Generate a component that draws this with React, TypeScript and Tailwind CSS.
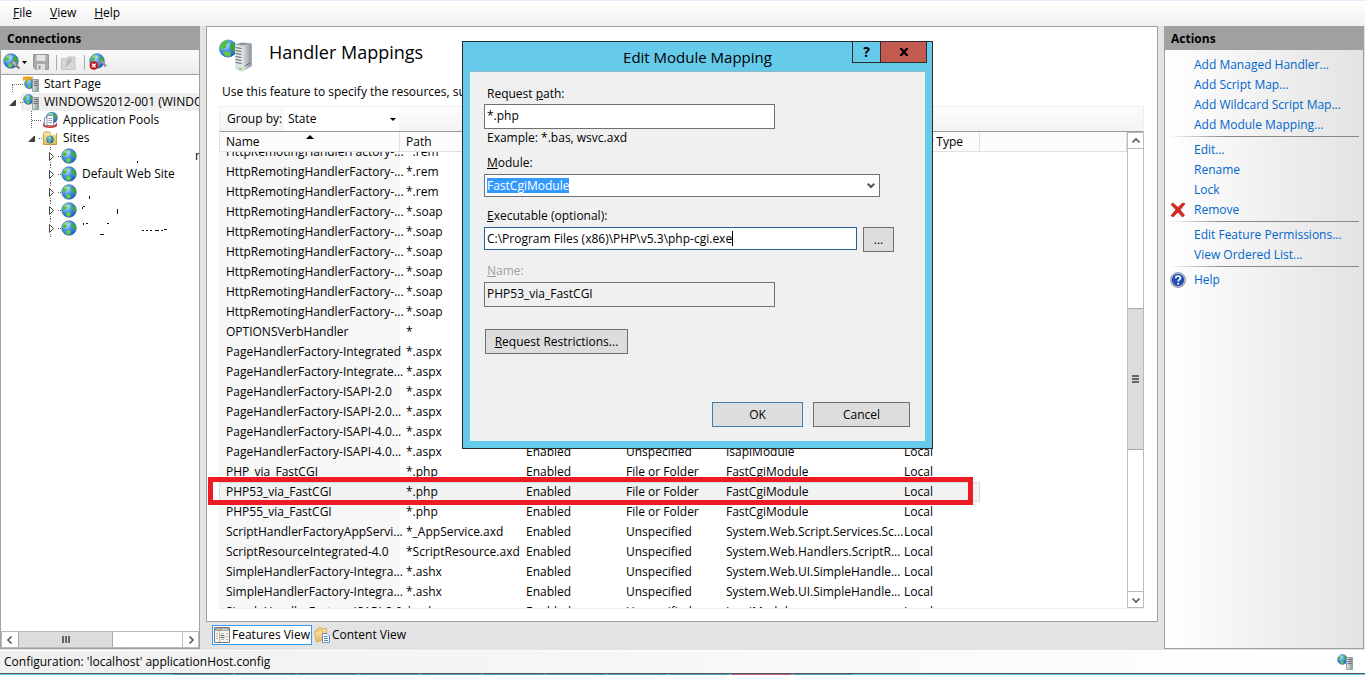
import React, { useLayoutEffect, useRef } from "react";

type HandlerRow = {
  name: string;
  path: string;
  pathType: string;
  handler: string;
  selected?: boolean;
};

const remoting = "HttpRemotingHandlerFactory-...";

const handlers: HandlerRow[] = [
  { name: remoting, path: "*.rem", pathType: "Unspecified", handler: "System.Runtime.Remoting..." },
  { name: remoting, path: "*.rem", pathType: "Unspecified", handler: "System.Runtime.Remoting..." },
  { name: remoting, path: "*.rem", pathType: "Unspecified", handler: "IsapiModule" },
  { name: remoting, path: "*.soap", pathType: "Unspecified", handler: "System.Runtime.Remoting..." },
  { name: remoting, path: "*.soap", pathType: "Unspecified", handler: "System.Runtime.Remoting..." },
  { name: remoting, path: "*.soap", pathType: "Unspecified", handler: "IsapiModule" },
  { name: remoting, path: "*.soap", pathType: "Unspecified", handler: "IsapiModule" },
  { name: remoting, path: "*.soap", pathType: "Unspecified", handler: "IsapiModule" },
  { name: remoting, path: "*.soap", pathType: "Unspecified", handler: "IsapiModule" },
  { name: "OPTIONSVerbHandler", path: "*", pathType: "Unspecified", handler: "ProtocolSupportModule" },
  { name: "PageHandlerFactory-Integrated", path: "*.aspx", pathType: "Unspecified", handler: "System.Web.UI.PageHandle..." },
  { name: "PageHandlerFactory-Integrate...", path: "*.aspx", pathType: "Unspecified", handler: "System.Web.UI.PageHandle..." },
  { name: "PageHandlerFactory-ISAPI-2.0", path: "*.aspx", pathType: "Unspecified", handler: "IsapiModule" },
  { name: "PageHandlerFactory-ISAPI-2.0...", path: "*.aspx", pathType: "Unspecified", handler: "IsapiModule" },
  { name: "PageHandlerFactory-ISAPI-4.0...", path: "*.aspx", pathType: "Unspecified", handler: "IsapiModule" },
  { name: "PageHandlerFactory-ISAPI-4.0...", path: "*.aspx", pathType: "Unspecified", handler: "IsapiModule" },
  { name: "PHP_via_FastCGI", path: "*.php", pathType: "File or Folder", handler: "FastCgiModule" },
  { name: "PHP53_via_FastCGI", path: "*.php", pathType: "File or Folder", handler: "FastCgiModule", selected: true },
  { name: "PHP55_via_FastCGI", path: "*.php", pathType: "File or Folder", handler: "FastCgiModule" },
  { name: "ScriptHandlerFactoryAppServi...", path: "*_AppService.axd", pathType: "Unspecified", handler: "System.Web.Script.Services.Sc..." },
  { name: "ScriptResourceIntegrated-4.0", path: "*ScriptResource.axd", pathType: "Unspecified", handler: "System.Web.Handlers.ScriptR..." },
  { name: "SimpleHandlerFactory-Integra...", path: "*.ashx", pathType: "Unspecified", handler: "System.Web.UI.SimpleHandle..." },
  { name: "SimpleHandlerFactory-Integra...", path: "*.ashx", pathType: "Unspecified", handler: "System.Web.UI.SimpleHandle..." },
  { name: "SimpleHandlerFactory-ISAPI-2.0", path: "*.ashx", pathType: "Unspecified", handler: "IsapiModule" },
];

const actionGroups = [
  ["Add Managed Handler...", "Add Script Map...", "Add Wildcard Script Map...", "Add Module Mapping..."],
  ["Edit...", "Rename", "Lock", "Remove"],
  ["Edit Feature Permissions...", "View Ordered List..."],
  ["Help"],
];

/* ---------- icons ---------- */

const IconDefs = () => (
  <svg width="0" height="0" className="absolute" aria-hidden="true">
    <defs>
      <radialGradient id="sea" cx="0.35" cy="0.3" r="0.8">
        <stop offset="0" stopColor="#c4e4ff" />
        <stop offset="0.45" stopColor="#4a92ee" />
        <stop offset="1" stopColor="#1c50b4" />
      </radialGradient>
      <linearGradient id="case" x1="0" y1="0" x2="1" y2="0">
        <stop offset="0" stopColor="#e3e7e9" />
        <stop offset="1" stopColor="#8d959a" />
      </linearGradient>
      <linearGradient id="folder" x1="0" y1="0" x2="0" y2="1">
        <stop offset="0" stopColor="#fbeab0" />
        <stop offset="1" stopColor="#e3b954" />
      </linearGradient>
    </defs>
  </svg>
);

const GlobeShape = () => (
  <g>
    <circle cx="8" cy="8" r="7.3" fill="url(#sea)" stroke="#2f5ca8" strokeWidth="0.6" />
    <path d="M2 5.5 4.2 2.4 7.2 1.4 8 3 6.4 4.6 6 6.4 4.2 7.4 2.8 8.8 1.2 8z" fill="#4fbf45" />
    <path d="M10.4 3.6 12.6 3.6 14.4 6 14.8 8.6 13.4 10.6 12.2 8.4 10.4 7z" fill="#3fae38" />
    <path d="M5.4 10.6 8 10 10 11.4 9.4 13.8 7 14.8 4.8 13z" fill="#63cf4c" />
    <ellipse cx="6" cy="3.6" rx="3" ry="1.6" fill="#fff" opacity="0.35" />
  </g>
);

const ServerShape = () => (
  <g>
    <path d="M9.5 3.5h6v12h-6z" fill="url(#case)" stroke="#8a9297" strokeWidth="0.8" />
    <path d="M10.5 5.5h4M10.5 7.5h4M10.5 9.5h4" stroke="#5b6367" strokeWidth="0.8" />
    <path d="M13 13h1.6v1.6H13z" fill="#5fe01c" />
  </g>
);

const GlobeIcon = () => (
  <svg width="16" height="16" viewBox="0 0 16 16" className="shrink-0">
    <GlobeShape />
  </svg>
);

const ServerIcon = ({ start = false }: { start?: boolean }) => (
  <svg width="16" height="16" viewBox="0 0 16 16" className="shrink-0">
    <g transform={start ? "translate(1 2) scale(0.7)" : "scale(0.68)"}>
      <GlobeShape />
    </g>
    <ServerShape />
    {start && <path d="M0 1h4l1-1 1 1h4L8.5 4 6 3 3.5 5.5 3 3 0 4.5z" fill="#f0a81c" stroke="#c98208" strokeWidth="0.4" />}
  </svg>
);

const ConnectIcon = ({ error = false }: { error?: boolean }) => (
  <svg width="18" height="18" viewBox="0 0 18 18" className="shrink-0">
    <GlobeShape />
    {error ? (
      <g>
        <path d="m10 10 3-1.5 4 5" stroke="#8d979e" strokeWidth="2.4" fill="none" />
        <circle cx="4.8" cy="12.5" r="4.3" fill="#c4161c" />
        <path d="m3 10.7 3.6 3.6m0-3.6L3 14.3" stroke="#fff" strokeWidth="1.4" />
      </g>
    ) : (
      <g>
        <path d="m8 9.5 3-2 3.5 3.5-2 3z" fill="#a9b6bf" stroke="#5a666e" strokeWidth="0.8" />
        <path d="m13 12.5 3.5 3" stroke="#66727a" strokeWidth="1.8" />
      </g>
    )}
  </svg>
);

const SaveIcon = () => (
  <svg width="16" height="16" viewBox="0 0 16 16">
    <path d="M0.5 0.5h15v15h-13l-2-2z" fill="#aaa" stroke="#999" />
    <path d="M3.5 1h9v6h-9z" fill="#e4e4e4" />
    <path d="M4 10h8v6H4z" fill="#dedede" />
    <path d="M5.5 11.5h2v4h-2z" fill="#999" />
  </svg>
);

const UpFolderIcon = () => (
  <svg width="15" height="15" viewBox="0 0 15 15">
    <path d="M0.5 3.5h5l1-1.5h7.5v12.5H0.5z" fill="#d6d6d6" stroke="#c4c4c4" />
    <path d="m3.5 12 3-5-2-.5 5-4 2 4.500-2-.5C9 9 7 11 3.5 12z" fill="#b8b8b8" />
  </svg>
);

const AppPoolIcon = () => (
  <svg width="16" height="16" viewBox="0 0 16 16" className="shrink-0">
    <g transform="translate(3.5 -0.5) scale(0.78)">
      <GlobeShape />
    </g>
    <path d="M1 9c0 7 14 7 14 0v5c-2 2.5-12 2.5-14 0z" fill="#cf3030" />
    <path d="M2.5 5.5h6v8h-6z" fill="#fff" stroke="#718195" strokeWidth="0.8" />
    <path d="M5 3.5h5.5l1 1v9H5z" fill="#fff" stroke="#718195" strokeWidth="0.8" />
    <path d="M6.5 6.5H10M6.5 8.5H10M6.5 10.5H10" stroke="#8797a8" strokeWidth="0.9" />
  </svg>
);

const SitesIcon = () => (
  <svg width="16" height="16" viewBox="0 0 16 16" className="shrink-0">
    <path d="M1.5 3.5 2.5 2h5l1 1.5h6v11h-13z" fill="url(#folder)" stroke="#c99d3c" />
    <path d="M9 3h5v1.5H9z" fill="#fff" />
    <g transform="translate(4 5.5) scale(0.5)">
      <GlobeShape />
    </g>
  </svg>
);

const HandlerMappingsIcon = () => (
  <svg width="34" height="34" viewBox="0 0 34 34" className="shrink-0">
    <circle cx="9" cy="9.5" r="9" fill="url(#sea)" />
    <path d="M1 7 3 3.5 8 1l2 1.5-2.5 3L7 8.5 3.5 10 1 11z" fill="#53bd3e" />
    <path d="M12 4l3-.5L17.5 7l.5 3-3 5-2-4-2-2z" fill="#3da536" />
    <path d="M4 13l5-1 3 2-1 4-5-1z" fill="#62c749" />
    <path d="M16 5.5 23 3.5l9.5 1V27L23 32.5l-7-3z" fill="#8d9599" />
    <path d="M16 5.5 23 6.5v26l-7-3z" fill="#dde2e4" />
    <path d="M23 6.5 32.5 4.5V27L23 32.5z" fill="url(#case)" />
    <path d="m16.5 8.5 6 1m-6 2 6 1m-6 2 6 1m-6 2 6 1m-6 2 6 1m-6 2 6 1" stroke="#636c74" strokeWidth="1" />
    <path d="m20 28.5 2.5.8v1.8l-2.5-.8z" fill="#55e40d" />
    <path d="m26 27 5-3" stroke="#5e6669" strokeWidth="1" />
  </svg>
);

const RemoveIcon = () => (
  <svg width="16" height="16" viewBox="0 0 16 16">
    <path
      d="M1 2.5 3 1l5 4.500L12.500 1l2.500.8L10 7.800l4.500 5.400L12.500 15 8 10l-5 5-2-1.500L6 7.800z"
      fill="#e1251b"
      stroke="#a3201b"
      strokeWidth="0.7"
    />
  </svg>
);

const HelpIcon = () => (
  <svg width="16" height="16" viewBox="0 0 16 16">
    <circle cx="8" cy="8" r="7.5" fill="#c9cdd6" stroke="#7c8496" strokeWidth="0.8" />
    <circle cx="8" cy="8" r="6.2" fill="#2450b4" />
    <path d="M5.7 6.3c0-3 4.7-3 4.7-.3 0 1.7-2.2 1.7-2.2 3.5" fill="none" stroke="#fff" strokeWidth="1.7" />
    <circle cx="8.2" cy="11.8" r="1" fill="#fff" />
  </svg>
);

const FeaturesIcon = () => (
  <svg width="16" height="16" viewBox="0 0 16 16" className="shrink-0">
    <path d="M0.5 0.5h15v15h-15z" fill="#f4f4f0" stroke="#7b7b76" />
    <path d="M1 1h14v3H1z" fill="#a9a9a4" />
    <path d="M9 2.5h1.5m1 0H13" stroke="#fff" />
    <path d="M5.5 4v11" stroke="#b5b5ae" />
    <path d="M2 6.5h2M2 9h2m-2 2.5h2M7 6.5h3m2 0h2M7 12.5h3m2 0h2" stroke="#b3b39f" />
    <path d="M6.5 8.5h4m-4 2h4" stroke="#5e6570" />
    <path d="M12 9.5h2.5" stroke="#b3b39f" />
  </svg>
);

const ContentIcon = () => (
  <svg width="16" height="16" viewBox="0 0 16 16" className="shrink-0">
    <path d="M3 2 6 0.5l2 1h4.5V12H3z" fill="#f3dc94" stroke="#cda649" strokeWidth="0.8" />
    <path d="M0.5 4.5 8 3l1.5 10-7 2z" fill="url(#folder)" stroke="#cda649" strokeWidth="0.8" />
    <path d="M8.5 6.5H13l2.5 2.5v6.5h-7z" fill="#fff" stroke="#6c8fc4" />
    <path d="M10 9.5h3.5M10 11.5h4M10 13.5h4" stroke="#4c86cf" />
  </svg>
);

const Chevron = ({ dir }: { dir: "up" | "down" | "left" | "right" }) => {
  const d = {
    up: "m1.5 6.5 3.5-3.5 3.5 3.5",
    down: "m1.5 3.5 3.5 3.5 3.5-3.5",
    left: "M6.5 1.5 3 5l3.5 3.5",
    right: "M3.5 1.5 7 5 3.5 8.5",
  }[dir];
  return (
    <svg width="10" height="10" viewBox="0 0 10 10">
      <path d={d} fill="none" stroke="#555" strokeWidth="1.6" />
    </svg>
  );
};

/* ---------- connections tree ---------- */

const Expander = ({ open, x }: { open: boolean; x: number }) =>
  open ? (
    <path d={`M${x} 12.5h5.5V7z`} fill="#404040" stroke="#262626" strokeWidth="0.8" />
  ) : (
    <path d={`M${x + 0.5} 5.5v8l4-4z`} fill="#fff" stroke="#444" strokeWidth="1" />
  );

const Gutter = ({ width, children }: { width: number; children: React.ReactNode }) => (
  <svg width={width} height="18" viewBox={`0 0 ${width} 18`} className="shrink-0">
    {children}
  </svg>
);

const dots = { stroke: "#666", strokeDasharray: "1 1", fill: "none" };

const SiteRow = ({ children }: { children?: React.ReactNode }) => (
  <li className="flex h-[18px] items-center">
    <Gutter width={60}>
      <path d="M49.5 0v4M49.5 15v3M57 9.5h3" {...dots} />
      <Expander open={false} x={48} />
    </Gutter>
    <GlobeIcon />
    <span className="ml-[5px] flex flex-1 items-center">{children}</span>
  </li>
);

const Specks = ({ d }: { d: string }) => (
  <svg width="110" height="18" viewBox="0 0 110 18">
    <path d={d} fill="#111" />
  </svg>
);

const PanelHeader = ({ children }: { children: React.ReactNode }) => (
  <h2 className="flex h-[23px] shrink-0 items-center bg-[#a0a0a0] pl-[6px] font-bold">{children}</h2>
);

const Connections = () => (
  <aside className="flex w-[200px] shrink-0 flex-col border border-[#a0a0a0] bg-white">
    <PanelHeader>Connections</PanelHeader>
    <div className="flex h-[25px] shrink-0 items-center border-b border-[#a0a0a0] bg-linear-to-b from-[#fafafa] to-[#ececec] pl-[2px]">
      <button aria-label="Connect" className="flex items-center gap-px">
        <ConnectIcon />
        <svg width="5" height="3" viewBox="0 0 5 3">
          <path d="M0 0h5L2.5 3z" />
        </svg>
      </button>
      <button aria-label="Save connections" className="ml-[6px]">
        <SaveIcon />
      </button>
      <span className="ml-[7px] h-[15px] w-px bg-[#aaa]" />
      <button aria-label="Up" className="ml-[4px]">
        <UpFolderIcon />
      </button>
      <span className="ml-[8px] h-[15px] w-px bg-[#aaa]" />
      <button aria-label="Disconnect" className="ml-[4px]">
        <ConnectIcon error />
      </button>
    </div>

    <ul className="flex-1 overflow-hidden whitespace-nowrap">
      <li className="flex h-[18px] items-center">
        <Gutter width={22}>
          <path d="M11.5 10v8M11 9.5h11" {...dots} />
        </Gutter>
        <ServerIcon start />
        <span className="ml-[5px]">Start Page</span>
      </li>
      <li className="flex h-[18px] items-center bg-linear-to-r from-white from-10% to-[#efefef] to-10%">
        <Gutter width={22}>
          <Expander open x={9} />
          <path d="M19 9.5h3" {...dots} />
        </Gutter>
        <ServerIcon />
        <span className="ml-[5px]">WINDOWS2012-001 (WINDOWS2012-001\Administrator)</span>
      </li>
      <li className="flex h-[18px] items-center">
        <Gutter width={41}>
          <path d="M30.5 0v18M31 9.5h10" {...dots} />
        </Gutter>
        <AppPoolIcon />
        <span className="ml-[5px]">Application Pools</span>
      </li>
      <li className="flex h-[18px] items-center">
        <Gutter width={41}>
          <Expander open x={28} />
          <path d="M38 9.5h3" {...dots} />
        </Gutter>
        <SitesIcon />
        <span className="ml-[5px]">Sites</span>
      </li>
      <SiteRow>
        <Specks d="M55 14h1v2h-1z" />
        <span className="ml-[3px]">r</span>
      </SiteRow>
      <SiteRow>Default Web Site</SiteRow>
      <SiteRow>
        <Specks d="M7 13h1v3H7z" />
      </SiteRow>
      <SiteRow>
        <Specks d="M1 5h2v1H1zM0 6h1v2H0zM35 8h1v5h-1z" />
      </SiteRow>
      <SiteRow>
        <Specks d="M1 4h1v2H1zM4 4h2v1H4zM25 4h2v1h-2zM18 15h4v1h-4zM60 11h2v1h-2zM64 11h2v1h-2zM68 11h2v1h-2zM73 11h4v1h-4zM79 11h2v1h-2zM82 10h3v1h-3z" />
      </SiteRow>
    </ul>

    <div className="flex h-[17px] shrink-0 border border-[#bbb]">
      <button aria-label="Scroll left" className="flex w-[16px] items-center justify-center">
        <Chevron dir="left" />
      </button>
      <div className="flex w-[95px] items-center justify-center gap-px border-x border-[#a8a8a8] bg-[#dcdcdc]">
        <span className="h-[7px] w-[2px] bg-[#666]" />
        <span className="h-[7px] w-[2px] bg-[#666]" />
        <span className="h-[7px] w-[2px] bg-[#666]" />
      </div>
      <button aria-label="Scroll right" className="ml-auto flex w-[16px] items-center justify-center border-l border-[#bbb]">
        <Chevron dir="right" />
      </button>
    </div>
  </aside>
);

/* ---------- handler list ---------- */

const HandlerTable = () => {
  const listRef = useRef<HTMLDivElement>(null);

  // the list opens half a row down
  useLayoutEffect(() => {
    if (listRef.current) listRef.current.scrollTop = 10;
  }, []);

  const th = "sticky top-0 h-[20px] border-r border-b border-[#e0e0e0] bg-[#fcfcfc] p-0 text-left font-normal";
  const td = "h-[20px] p-0";

  return (
    <div className="flex min-h-0 flex-1 border-b border-[#eee]">
      <div ref={listRef} className="min-w-0 flex-1 overflow-hidden">
        <table className="w-full table-fixed border-separate border-spacing-0 leading-[18px] whitespace-nowrap">
          <colgroup>
            <col className="w-[181px]" />
            <col className="w-[120px]" />
            <col className="w-[100px]" />
            <col className="w-[100px]" />
            <col className="w-[180px]" />
            <col className="w-[80px]" />
            <col />
          </colgroup>
          <thead>
            <tr>
              <th className={th + " border-l pl-[6px]"}>
                Name
                <svg width="8" height="4" viewBox="0 0 8 4" className="absolute top-[3px] left-[86px]">
                  <path d="M0 4h8L4 0z" />
                </svg>
              </th>
              <th className={th + " pl-[6px]"}>Path</th>
              <th className={th + " pl-[6px]"}>State</th>
              <th className={th + " pl-[6px]"}>Path Type</th>
              <th className={th + " pl-[6px]"}>Handler</th>
              <th className={th + " pl-[4px]"}>Entry Type</th>
              <th className={th} aria-label="Filler" />
            </tr>
          </thead>
          <tbody>
            {handlers.map((row, i) => {
              const mark = row.selected ? " border-y border-[#dadada] bg-[#f2f2f2]" : "";
              return (
                <tr key={i}>
                  <td className={td + " pl-[6px]" + (mark ? mark + " border-l" : " border-l border-[#f7f7f7] bg-[#f7f7f7]")}>
                    {row.name}
                  </td>
                  <td className={td + " pl-[6px]" + mark}>{row.path}</td>
                  <td className={td + " pl-[6px]" + mark}>Enabled</td>
                  <td className={td + " pl-[6px]" + mark}>{row.pathType}</td>
                  <td className={td + " pl-[6px]" + mark}>{row.handler}</td>
                  <td className={td + " pl-[4px]" + (mark && mark + " border-r")}>Local</td>
                  <td />
                </tr>
              );
            })}
          </tbody>
        </table>
      </div>
      <div className="flex w-[17px] shrink-0 flex-col border border-[#bbb] bg-white">
        <button aria-label="Scroll up" className="flex h-[16px] items-center justify-center border-b border-[#bbb]">
          <Chevron dir="up" />
        </button>
        <div className="flex-[159]" />
        <div className="flex h-[142px] flex-col items-center justify-center gap-px border-y border-[#a8a8a8] bg-[#dcdcdc]">
          <span className="h-[2px] w-[7px] bg-[#666]" />
          <span className="h-[2px] w-[7px] bg-[#666]" />
          <span className="h-[2px] w-[7px] bg-[#666]" />
        </div>
        <div className="flex-[141]" />
        <button aria-label="Scroll down" className="flex h-[16px] items-center justify-center border-t border-[#bbb]">
          <Chevron dir="down" />
        </button>
      </div>
    </div>
  );
};

const FeaturePage = () => (
  <main className="flex min-w-0 flex-1 flex-col">
    <section className="relative flex min-h-0 flex-1 flex-col border border-[#a0a0a0] bg-white pt-[12px] pr-[13px] pb-[12px] pl-[12px]">
      <div className="flex h-[34px] shrink-0 items-center gap-[16px]">
        <HandlerMappingsIcon />
        <h1 className="mb-[8px] text-[18px]">Handler Mappings</h1>
      </div>
      <p className="mt-[10px] mb-[5px] h-[18px] max-w-[700px] shrink-0 truncate pl-[3px] leading-[18px]">
        Use this feature to specify the resources, such as DLLs and managed code, that handle responses
      </p>
      <div className="flex h-[26px] shrink-0 items-center border-x border-t border-b border-[#eee] border-b-[#999] bg-linear-to-b from-[#fcfcfc] to-[#f3f3f3] pl-[7px]">
        <label htmlFor="group-by" className="w-[57px]">
          Group by:
        </label>
        <div className="relative flex h-full items-center">
          <select id="group-by" className="h-full w-[115px] appearance-none bg-white pl-[4px]">
            <option>State</option>
          </select>
          <svg width="6" height="3" viewBox="0 0 6 3" className="pointer-events-none absolute right-[3px]">
            <path d="M0 0h6L3 3z" />
          </svg>
        </div>
      </div>
      <HandlerTable />
      <div className="pointer-events-none absolute top-[450px] left-px h-[28px] w-[765px] border-[5px] border-[#ed1c24]" />
    </section>

    <div className="flex h-[27px] shrink-0 items-start pt-[3px] pl-[6px]">
      <button className="flex h-[20px] items-center gap-[2px] border border-[#3399ff] bg-white px-px">
        <FeaturesIcon />
        Features View
      </button>
      <button className="flex h-[20px] items-center gap-[2px] px-[2px]">
        <ContentIcon />
        Content View
      </button>
    </div>
  </main>
);

/* ---------- actions ---------- */

const Actions = () => (
  <aside className="mr-px flex w-[200px] shrink-0 flex-col border border-[#a0a0a0] bg-linear-to-r from-white to-[#e3e3e3]">
    <PanelHeader>Actions</PanelHeader>
    <div className="pt-[5px]">
      {actionGroups.map((group, i) => (
        <ul key={i}>
          {i > 0 && <li className="mt-px mr-[4px] mb-[3px] ml-[4px] h-px bg-linear-to-r from-transparent to-[#888] to-30%" />}
          {group.map((label) => (
            <li key={label} className="flex h-[20px] items-center">
              <span className="flex w-[29px] justify-center pr-[3px]">
                {label === "Remove" && <RemoveIcon />}
                {label === "Help" && <HelpIcon />}
              </span>
              <a href="#" className="whitespace-nowrap text-[#0066cc]">
                {label}
              </a>
            </li>
          ))}
        </ul>
      ))}
    </div>
  </aside>
);

/* ---------- dialog ---------- */

const EditModuleDialog = () => {
  const label = "ml-[3px] flex h-[16px] items-center whitespace-pre";
  const button = "h-[25px] border border-[#707070] bg-[#dddddd]";

  return (
    <div
      role="dialog"
      aria-labelledby="dialog-title"
      className="absolute top-[41px] left-[462px] w-[471px] border border-[#2b2b2b] bg-[#66cbea] px-[7px] pb-[7px]"
    >
      <div className="relative flex h-[29px] items-center justify-center">
        <h2 id="dialog-title" className="text-[15px]">
          Edit Module Mapping
        </h2>
        <div className="absolute top-0 -right-[2px] flex h-[21px] border-x border-b border-[#2b2b2b] font-bold">
          <button aria-label="Help" className="w-[28px] border-r border-[#2b2b2b] text-[14px] leading-[18px]">
            ?
          </button>
          <button aria-label="Close" className="flex w-[45px] items-center justify-center bg-[#c35a50]">
            <svg width="10" height="8" viewBox="0 0 10 8">
              <path d="m1.5 0 7 8m0-8-7 8" stroke="#000" strokeWidth="2.2" />
            </svg>
          </button>
        </div>
      </div>

      <form className="border-t border-[#8fb9c8] bg-[#f0f0f0] pt-[14px] pr-[15px] pb-[14px] pl-[14px]">
        <label htmlFor="request-path" className={label}>
          Request <u>p</u>ath:
        </label>
        <input
          id="request-path"
          defaultValue="*.php"
          className="mt-[2px] block h-[25px] w-[291px] border border-[#707070] bg-white px-[2px] pb-[2px]"
        />
        <p className="ml-[3px] h-[18px] leading-[18px]">Example: *.bas, wsvc.axd</p>

        <label htmlFor="module" className={label + " mt-[8px]"}>
          <u>M</u>odule:
        </label>
        <div className="mt-[3px] flex h-[23px] w-[396px] items-center border border-[#707070] bg-white pr-[4px] pl-[2px]">
          <select
            id="module"
            className="h-[15px] appearance-none bg-[#3399ff] leading-[15px] text-white field-sizing-content"
          >
            <option>FastCgiModule</option>
          </select>
          <svg width="8" height="6" viewBox="0 0 8 6" className="ml-auto">
            <path d="m0.7 0.7 3.3 3.3L7.3 0.7" fill="none" stroke="#555" strokeWidth="2" />
          </svg>
        </div>

        <label htmlFor="executable" className={label + " mt-[11px]"}>
          <u>E</u>xecutable (optional):
        </label>
        <div className="mt-[3px] flex items-start gap-[6px]">
          <div className="flex h-[23px] w-[373px] items-center border border-[#26639c] bg-white pl-[2px]">
            <input
              id="executable"
              defaultValue="C:\Program Files (x86)\PHP\v5.3\php-cgi.exe"
              className="outline-none field-sizing-content"
            />
            <span className="h-[15px] w-px bg-black" />
          </div>
          <button type="button" aria-label="Browse" className={button + " w-[31px]"}>
            ...
          </button>
        </div>

        <label htmlFor="mapping-name" className={label + " mt-[11px] text-[#a0a0a0]"}>
          <u>N</u>ame:
        </label>
        <input
          id="mapping-name"
          readOnly
          defaultValue="PHP53_via_FastCGI"
          className="mt-[3px] block h-[25px] w-[291px] border border-[#707070] px-[2px] pb-[2px]"
        />

        <button type="button" className={button + " mt-[22px] ml-px block w-[143px]"}>
          <u>R</u>equest Restrictions...
        </button>

        <div className="mt-[48px] flex justify-end gap-[10px]">
          <button type="button" className="h-[25px] w-[91px] border border-[#3c7fb1] bg-[#dddddd]">
            OK
          </button>
          <button type="button" className={button + " w-[97px]"}>
            Cancel
          </button>
        </div>
      </form>
    </div>
  );
};

export default function App() {
  return (
    <div className="relative flex h-screen flex-col overflow-hidden bg-[#e3e3e3] font-['Open_Sans','Noto_Sans',sans-serif] text-[12px] leading-[16px] text-black">
      <IconDefs />
      <nav className="flex h-[26px] shrink-0 items-center gap-[18px] border-t border-[#e4ecfb] bg-linear-to-b from-white to-[#f0f0f0] pb-px pl-[13px]">
        <button>
          <u>F</u>ile
        </button>
        <button>
          <u>V</u>iew
        </button>
        <button>
          <u>H</u>elp
        </button>
      </nav>

      <div className="flex min-h-0 flex-1 gap-[6px] pb-px">
        <Connections />
        <FeaturePage />
        <Actions />
      </div>

      <footer className="flex h-[23px] shrink-0 items-center justify-between border-t border-white bg-linear-to-r from-[#f0f0f0] to-white pr-[12px] pl-[4px]">
        <span>Configuration: 'localhost' applicationHost.config</span>
        <ServerIcon />
      </footer>
      <div className="flex h-[2px] shrink-0 gap-[3px] border-t border-[#555] bg-[#66cbea] pl-[174px]">
        {[0, 1, 2, 3, 4, 5, 6, 7, 8, 9, 10].map((n) => (
          <span key={n} className={n === 9 ? "w-[59px] bg-[#c0607a]" : "w-[59px] bg-[#4aa3c0]"} />
        ))}
      </div>

      <EditModuleDialog />
    </div>
  );
}
